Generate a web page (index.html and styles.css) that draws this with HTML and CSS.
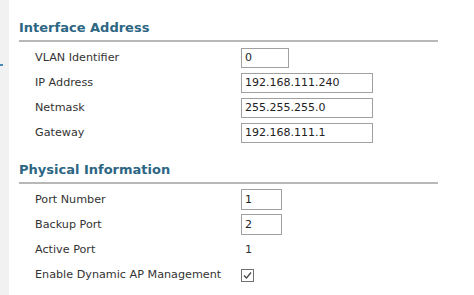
FILE: index.html
```html
<!DOCTYPE html>
<html lang="en">
<head>
    <meta charset="UTF-8">
    <title>Interface</title>
    <link rel="stylesheet" href="styles.css">
</head>
<body>
    <div class="page">
        <div class="sidebar"><span class="tab-mark"></span></div>
        <div class="content">
            <h2 class="section-title">Interface Address</h2>
            <div class="rows">
                <div class="row">
                    <label>VLAN Identifier</label>
                    <input type="text" class="short" value="0">
                </div>
                <div class="row">
                    <label>IP Address</label>
                    <input type="text" class="long" value="192.168.111.240">
                </div>
                <div class="row">
                    <label>Netmask</label>
                    <input type="text" class="long" value="255.255.255.0">
                </div>
                <div class="row">
                    <label>Gateway</label>
                    <input type="text" class="long" value="192.168.111.1">
                </div>
            </div>

            <h2 class="section-title second">Physical Information</h2>
            <div class="rows">
                <div class="row">
                    <label>Port Number</label>
                    <input type="text" class="tiny" value="1">
                </div>
                <div class="row">
                    <label>Backup Port</label>
                    <input type="text" class="tiny" value="2">
                </div>
                <div class="row">
                    <label>Active Port</label>
                    <span class="value">1</span>
                </div>
                <div class="row">
                    <label>Enable Dynamic AP Management</label>
                    <span class="check">
                        <svg width="13" height="13" viewBox="0 0 13 13">
                            <rect x="0.5" y="0.5" width="12" height="12" fill="#fff" stroke="#707070"/>
                            <path d="M3 6.5 L5.5 9 L10 3.5" fill="none" stroke="#444" stroke-width="1.2"/>
                        </svg>
                    </span>
                </div>
            </div>
        </div>
    </div>
</body>
</html>
```

FILE: styles.css
```css
* {
    box-sizing: border-box;
    margin: 0;
    padding: 0;
}
body {
    background: #fff;
    font-family: "DejaVu Sans", Verdana, sans-serif;
    font-size: 11.2px;
    color: #333;
}
.page {
    display: flex;
    height: 295px;
}
.sidebar {
    position: relative;
    width: 9px;
    background: #f1f1f1;
}
.tab-mark {
    position: absolute;
    left: 0;
    top: 64px;
    width: 3px;
    height: 2px;
    background: #4a8ab8;
}
.content {
    width: 429px;
    padding-left: 10px;
    padding-top: 20px;
}

/* section headers */
.section-title {
    font-size: 13px;
    font-weight: bold;
    line-height: 16px;
    color: #2d6683;
    padding-bottom: 4px;
    border-bottom: 2px solid #b8b8b8;
}
.section-title.second {
    margin-top: 17px;
}

/* form rows */
.rows {
    padding-top: 3px;
    padding-left: 16px;
}
.row {
    display: grid;
    grid-template-columns: 206px auto;
    align-items: center;
    height: 25px;
}
.row label {
    line-height: 14px;
}
.row input {
    height: 20px;
    border: 1px solid #a0a0a0;
    padding: 0 3px;
    font-family: "DejaVu Sans", Verdana, sans-serif;
    font-size: 11px;
    color: #222;
    background: #fff;
    outline: none;
}
.short { width: 48px; }
.long { width: 132px; }
.tiny { width: 41px; height: 21px !important; }
.value {
    padding-left: 4px;
}
.check {
    display: flex;
    padding-top: 1px;
}
```
